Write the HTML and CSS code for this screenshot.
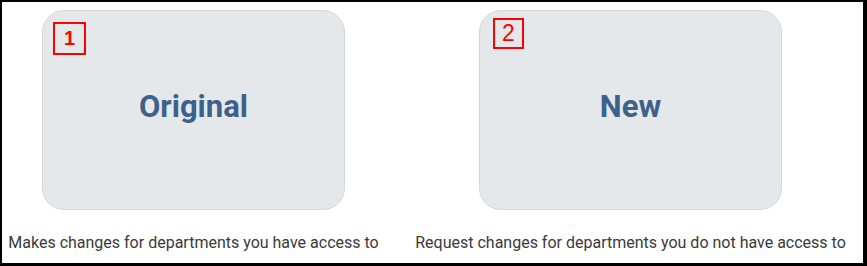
FILE: index.html
```html
<!DOCTYPE html>
<html>
<head>
<meta charset="utf-8">
<link rel="stylesheet" href="styles.css">
</head>
<body>
<div class="frame">
  <div class="options">
    <div class="option">
      <div class="card">
        <span class="badge badge-one">1</span>
        <span class="card-title">Original</span>
      </div>
      <p class="caption">Makes changes for departments you have access to</p>
    </div>
    <div class="option">
      <div class="card">
        <span class="badge badge-two">2</span>
        <span class="card-title">New</span>
      </div>
      <p class="caption">Request changes for departments you do not have access to</p>
    </div>
  </div>
</div>
</body>
</html>
```
FILE: styles.css
```css
html, body {
  margin: 0;
  padding: 0;
  background: #ffffff;
}
.frame {
  box-sizing: border-box;
  width: 867px;
  height: 266px;
  border-style: solid;
  border-color: #000000;
  border-width: 2px 4px 3px 2px;
  background: #ffffff;
  overflow: hidden;
}
.options {
  display: flex;
  gap: 54px;
}
.option {
  width: 383px;
  display: flex;
  flex-direction: column;
  align-items: center;
}
.card {
  position: relative;
  box-sizing: border-box;
  width: 303px;
  height: 200px;
  margin-top: 8px;
  background: #e5e8eb;
  border: 1px solid #d3d6da;
  border-radius: 22px;
  display: flex;
  align-items: center;
  justify-content: center;
}
.card-title {
  font-family: Roboto, "Liberation Sans", sans-serif;
  font-weight: 700;
  font-size: 31px;
  color: #3e6189;
  margin-top: -8px;
}
.badge {
  position: absolute;
  box-sizing: border-box;
  border: 2px solid #ff0000;
  color: #ff0000;
  font-family: "Liberation Sans", Arial, sans-serif;
  display: flex;
  align-items: center;
  justify-content: center;
}
.badge-one {
  left: 10px;
  top: 11px;
  width: 33px;
  height: 33px;
  font-weight: 700;
  font-size: 20px;
}
.badge-two {
  left: 13px;
  top: 7px;
  width: 31px;
  height: 31px;
  font-weight: 400;
  font-size: 23px;
}
.caption {
  margin: 23px 0 0;
  font-family: Roboto, "Liberation Sans", sans-serif;
  font-size: 16px;
  line-height: 19px;
  color: #3a3a3a;
  white-space: nowrap;
}
```
